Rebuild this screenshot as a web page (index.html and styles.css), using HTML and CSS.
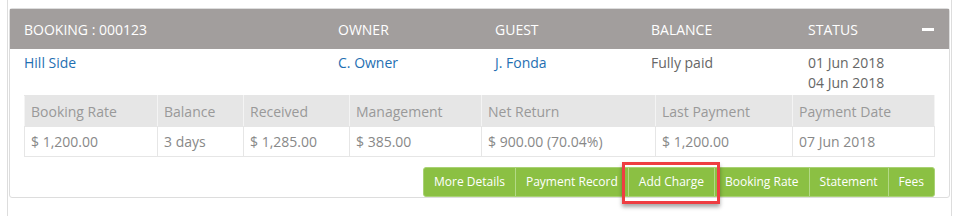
FILE: index.html
```html
<!DOCTYPE html>
<html lang="en">
<head>
    <meta charset="UTF-8">
    <meta name="viewport" content="width=device-width, initial-scale=1.0">
    <title>Booking</title>
    <link rel="stylesheet" href="styles.css">
</head>
<body>
    <div class="wrap">
        <div class="booking-card">
            <div class="card-head">
                <div>BOOKING : 000123</div>
                <div>OWNER</div>
                <div>GUEST</div>
                <div>BALANCE</div>
                <div class="status-head">STATUS <span class="collapse"></span></div>
            </div>

            <div class="card-body">
                <div class="summary">
                    <div><a href="#">Hill Side</a></div>
                    <div><a href="#">C. Owner</a></div>
                    <div><a href="#">J. Fonda</a></div>
                    <div>Fully paid</div>
                    <div>01 Jun 2018<br>04 Jun 2018</div>
                </div>

                <table class="figures">
                    <colgroup>
                        <col class="c1">
                        <col class="c2">
                        <col class="c3">
                        <col class="c4">
                        <col class="c5">
                        <col class="c6">
                        <col class="c7">
                    </colgroup>
                    <tr>
                        <th>Booking Rate</th>
                        <th>Balance</th>
                        <th>Received</th>
                        <th>Management</th>
                        <th>Net Return</th>
                        <th>Last Payment</th>
                        <th>Payment Date</th>
                    </tr>
                    <tr>
                        <td>$ 1,200.00</td>
                        <td>3 days</td>
                        <td>$ 1,285.00</td>
                        <td>$ 385.00</td>
                        <td>$ 900.00 (70.04%)</td>
                        <td>$ 1,200.00</td>
                        <td>07 Jun 2018</td>
                    </tr>
                </table>

                <div class="actions">
                    <div class="btn-group">
                        <a href="#" class="btn">More Details</a>
                        <a href="#" class="btn">Payment Record</a>
                        <a href="#" class="btn highlighted">Add Charge</a>
                        <a href="#" class="btn">Booking Rate</a>
                        <a href="#" class="btn">Statement</a>
                        <a href="#" class="btn">Fees</a>
                    </div>
                </div>
            </div>
        </div>
    </div>
</body>
</html>
```

FILE: styles.css
```css
body {
    margin: 0;
    font-family: "Open Sans", "Liberation Sans", sans-serif;
    font-size: 14px;
    color: #666;
    background: #fff;
}
.wrap {
    margin-left: 7px;
    width: 945px;
    height: 216px;
    border-left: 1px solid #ddd;
    border-right: 1px solid #ddd;
    padding: 8px 1px 0 1px;
    box-sizing: border-box;
}
.booking-card {
    border: 1px solid #ddd;
    border-radius: 3px;
    background: #fff;
    height: 190px;
    box-sizing: border-box;
}
.card-head {
    display: grid;
    grid-template-columns: 314px 157px 156px 157px 1fr;
    align-items: center;
    height: 40px;
    padding-left: 14px;
    background: #a29e9d;
    color: #fff;
    font-size: 14px;
}
.status-head {
    display: flex;
    justify-content: space-between;
    align-items: center;
    padding-right: 15px;
}
.collapse {
    width: 12px;
    height: 3px;
    background: #fff;
}
.card-body {
    padding: 4px 14px 0 14px;
}
.summary {
    display: grid;
    grid-template-columns: 314px 157px 156px 157px 1fr;
    line-height: 20px;
    color: #666;
}
.summary a {
    color: #1f6fb2;
    text-decoration: none;
}
.figures {
    width: 911px;
    margin-top: 2px;
    border-collapse: collapse;
    table-layout: fixed;
}
.figures th,
.figures td {
    text-align: left;
    font-weight: normal;
    padding: 0 6px;
    border: 1px solid #e6e6e6;
    white-space: nowrap;
    overflow: hidden;
}
.figures th {
    height: 30px;
    background: #e6e6e6;
    color: #999;
    border-color: #e6e6e6 #f4f4f4;
}
.figures td {
    height: 29px;
    color: #888;
}
.figures .c1 { width: 133px; }
.figures .c2 { width: 86px; }
.figures .c3 { width: 106px; }
.figures .c4 { width: 132px; }
.figures .c5 { width: 174px; }
.figures .c6 { width: 137px; }
.figures .c7 { width: 142px; }
.actions {
    display: flex;
    justify-content: flex-end;
    margin-top: 10px;
}
.btn-group {
    display: flex;
    border: 1px solid #a9d274;
    border-radius: 3px;
    background: #8bc043;
}
.btn {
    position: relative;
    display: block;
    height: 28px;
    line-height: 28px;
    padding: 0 10px;
    font-size: 12px;
    color: #fff;
    text-decoration: none;
    border-left: 1px solid #b3d986;
}
.btn:first-child {
    border-left: none;
}
.highlighted::after {
    content: "";
    position: absolute;
    left: -7px;
    right: -6px;
    top: -6px;
    bottom: -8px;
    border: 3px solid #ee3d42;
    box-shadow: 0 3px 4px rgba(0, 0, 0, 0.35);
}
```
